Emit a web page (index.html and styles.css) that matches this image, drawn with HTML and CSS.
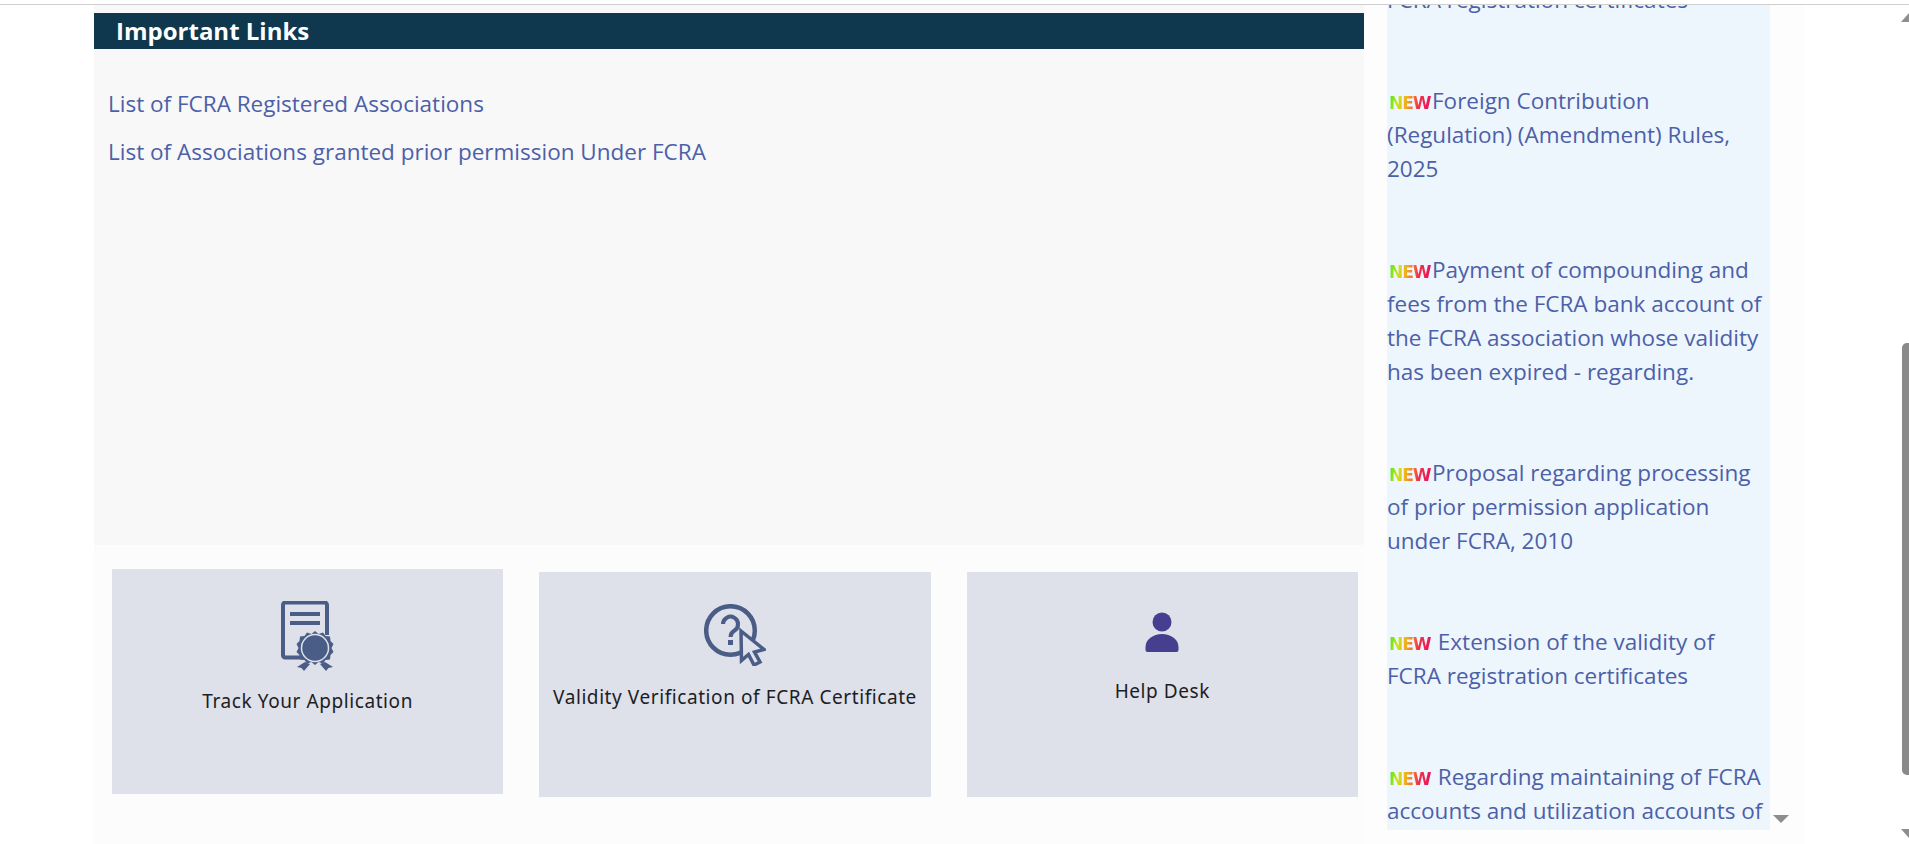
FILE: index.html
```html
<!DOCTYPE html>
<html lang="en">

<head>
    <meta charset="UTF-8">
    <meta name="viewport" content="width=device-width, initial-scale=1.0">
    <title>FCRA Online Services</title>
    <link rel="stylesheet" href="styles.css">
</head>

<body>
    <div class="page">
        <div class="panel">
            <!-- Left column -->
            <div class="main-col">
                <div class="links-area">
                    <h2 class="links-title">Important Links</h2>
                    <ul class="links-list">
                        <li><a href="#">List of FCRA Registered Associations</a></li>
                        <li><a href="#">List of Associations granted prior permission Under FCRA</a></li>
                    </ul>
                </div>

                <div class="cards">
                    <a href="#" class="card card-track">
                        <svg class="icon-track" viewBox="0 0 53 70" width="53" height="70">
                            <path d="M46 34V4a2.500 2.500 0 0 0-2.500-2.500H4A2.500 2.500 0 0 0 2 4v50a2.500 2.500 0 0 0 2 2.500h20" fill="none" stroke="#4a5d86" stroke-width="4" />
                            <path d="M9 13h30M9 22h30" stroke="#4a5d86" stroke-width="4" fill="none" />
                            <path d="M34 30l3.500 3 4.500-1.500 2.500 3.500 4.500.5.5 4.500 3 3-2 4 2 4-3 3-.5 4.500-4.500.5-2.500 3.500-4.500-1.500-3.500 3-3.500-3-4.500 1.500-2.500-3.500-4.500-.5-.5-4.500-3-3 2-4-2-4 3-3 .5-4.500 4.500-.5 2.500-3.500 4.500 1.500z" fill="#4a5d86" />
                            <circle cx="34" cy="47" r="13.500" fill="none" stroke="#dee0ea" stroke-width="1.500" />
                            <circle cx="34" cy="47" r="11.500" fill="#4a5d86" />
                            <path d="M24 61l5 2-6 7-2.500-3-4.500-1zM44 61l-5 2 6 7 2.500-3 4.500-1z" fill="#4a5d86" />
                        </svg>
                        <span class="card-label">Track Your Application</span>
                    </a>
                    <a href="#" class="card card-verify">
                        <svg class="icon-verify" viewBox="0 0 62 62" width="62" height="62">
                            <circle cx="26.500" cy="26.500" r="24.300" fill="none" stroke="#4a5d86" stroke-width="4.500" />
                            <path d="M19 20a7.500 7.500 0 1 1 11.500 6.500c-2.500 1.500-4 3-4 6.500" fill="none" stroke="#4a5d86" stroke-width="4" />
                            <rect x="24" y="36" width="5" height="5" fill="#4a5d86" />
                            <path d="M37 27l23 18.500-9.500 2.500 5.500 10-6 3-5.500-10.500-7 6z" fill="#dee0ea" stroke="#4a5d86" stroke-width="3.500" stroke-linejoin="miter" />
                        </svg>
                        <span class="card-label">Validity Verification of FCRA Certificate</span>
                    </a>
                    <a href="#" class="card card-help">
                        <svg class="icon-help" viewBox="0 0 34 40" width="34" height="40">
                            <circle cx="17" cy="10" r="9.500" fill="#463f8f" />
                            <path d="M.5 38v-3a16.500 13 0 0 1 33 0v3a2 2 0 0 1-2 2H2.500a2 2 0 0 1-2-2z" fill="#463f8f" />
                        </svg>
                        <span class="card-label">Help Desk</span>
                    </a>
                </div>
            </div>

            <!-- News column, scrolled part way down -->
            <div class="news-col">
                <ul class="news-list">
                    <li><a href="#">FCRA registration certificates</a></li>
                    <li><a href="#"><span class="new-tag">NEW</span>Foreign Contribution (Regulation) (Amendment) Rules, 2025</a></li>
                    <li><a href="#"><span class="new-tag">NEW</span>Payment of compounding and fees from the FCRA bank account of the FCRA association whose validity has been expired - regarding.</a></li>
                    <li><a href="#"><span class="new-tag">NEW</span>Proposal regarding processing of prior permission application under FCRA, 2010</a></li>
                    <li><a href="#"><span class="new-tag">NEW</span> Extension of the validity of FCRA registration certificates</a></li>
                    <li><a href="#"><span class="new-tag">NEW</span> Regarding maintaining of FCRA accounts and utilization accounts of</a></li>
                </ul>
            </div>
            <span class="news-arrow"></span>
        </div>
    </div>

    <!-- Window scrollbar -->
    <div class="scrollbar">
        <span class="scroll-up"></span>
        <span class="scroll-thumb"></span>
        <span class="scroll-down"></span>
    </div>
</body>

</html>
```

FILE: styles.css
```css
html, body {
    margin: 0;
    height: 100%;
    overflow: hidden;
    background-color: #fff;
}

body {
    font-family: "Open Sans", "Noto Sans", sans-serif;
    position: relative;
}

a {
    text-decoration: none;
}

ul {
    list-style: none;
    margin: 0;
    padding: 0;
}

.page {
    height: 100%;
    box-sizing: border-box;
    padding: 0 104px 0 94px;
    display: flex;
    flex-direction: column;
}

/* Thin rule near the top of the window */
.page::before {
    content: "";
    flex-shrink: 0;
    height: 4px;
    margin: 0 -104px 0 -94px;
    border-bottom: 1px solid #cfcfcf;
}

.panel {
    flex: 1;
    min-height: 0;
    display: flex;
    padding-right: 35px;
    position: relative;
    background-color: #fdfdfe;
}

/* Left column */
.main-col {
    width: 1270px;
    flex-shrink: 0;
    display: flex;
    flex-direction: column;
}

.links-area {
    height: 540px;
    padding-top: 8px;
    box-sizing: border-box;
    background-color: #f8f8f9;
}

.links-title {
    margin: 0;
    height: 36px;
    line-height: 36px;
    padding-left: 22px;
    background-color: #0f384f;
    color: #fff;
    font-size: 24px;
    font-weight: 700;
}

.links-list {
    padding: 40px 14px 0;
    font-size: 22.5px;
}

.links-list li {
    height: 48px;
    line-height: 30px;
}

.links-list a,
.news-list a {
    color: #4c60a8;
}

.cards {
    flex: 1;
    display: grid;
    grid-template-columns: repeat(3, 1fr);
    column-gap: 36px;
    align-items: start;
    padding: 27px 6px 0 18px;
    background-color: #fcfcfd;
}

.card {
    height: 225px;
    box-sizing: border-box;
    display: flex;
    flex-direction: column;
    align-items: center;
    background-color: #dee0ea;
    color: #1d1d24;
}

.card-label {
    font-family: "Noto Sans", sans-serif;
    font-size: 19px;
    line-height: 24px;
    letter-spacing: 0.58px;
    white-space: nowrap;
}

.card-track {
    margin-top: -3px;
    padding-top: 32px;
}

.card-track .card-label {
    margin-top: 18px;
}

.card-verify {
    padding-top: 32px;
}

.card-verify .card-label {
    margin-top: 19px;
}

.card-help {
    padding-top: 40px;
}

.card-help .card-label {
    margin-top: 27px;
}

/* News column */
.news-col {
    width: 383px;
    margin-left: 23px;
    flex-shrink: 0;
    height: 825px;
    overflow: hidden;
    background-color: #eef6fd;
}

.news-list {
    margin-top: -22px;
    font-size: 22.5px;
}

.news-list li {
    line-height: 34px;
    margin-bottom: 67px;
}

.new-tag {
    display: inline-block;
    width: 45px;
    font-family: "DejaVu Sans", sans-serif;
    font-size: 17px;
    font-weight: 700;
    line-height: 18px;
    letter-spacing: -1px;
    padding-left: 2px;
    box-sizing: border-box;
    background: linear-gradient(100deg, #3fe02a 4%, #c8e814 24%, #f5a623 45%, #f0304a 70%, #e8105a 96%);
    -webkit-background-clip: text;
    background-clip: text;
    color: transparent;
}

.news-arrow {
    position: absolute;
    left: 1679px;
    top: 810px;
    border-left: 8px solid transparent;
    border-right: 8px solid transparent;
    border-top: 8px solid #8e8e8e;
}

/* Window scrollbar */
.scrollbar {
    position: absolute;
    top: 0;
    right: 0;
    bottom: 0;
    width: 7px;
}

.scroll-up {
    position: absolute;
    top: 13px;
    right: 0;
    border-left: 8px solid transparent;
    border-bottom: 9px solid #8e8e8e;
}

.scroll-thumb {
    position: absolute;
    top: 343px;
    bottom: 69px;
    right: 0;
    width: 7px;
    border-radius: 5px 0 0 5px;
    background-color: #8a8a8a;
}

.scroll-down {
    position: absolute;
    top: 829px;
    right: 0;
    border-left: 8px solid transparent;
    border-top: 9px solid #8e8e8e;
}
```
